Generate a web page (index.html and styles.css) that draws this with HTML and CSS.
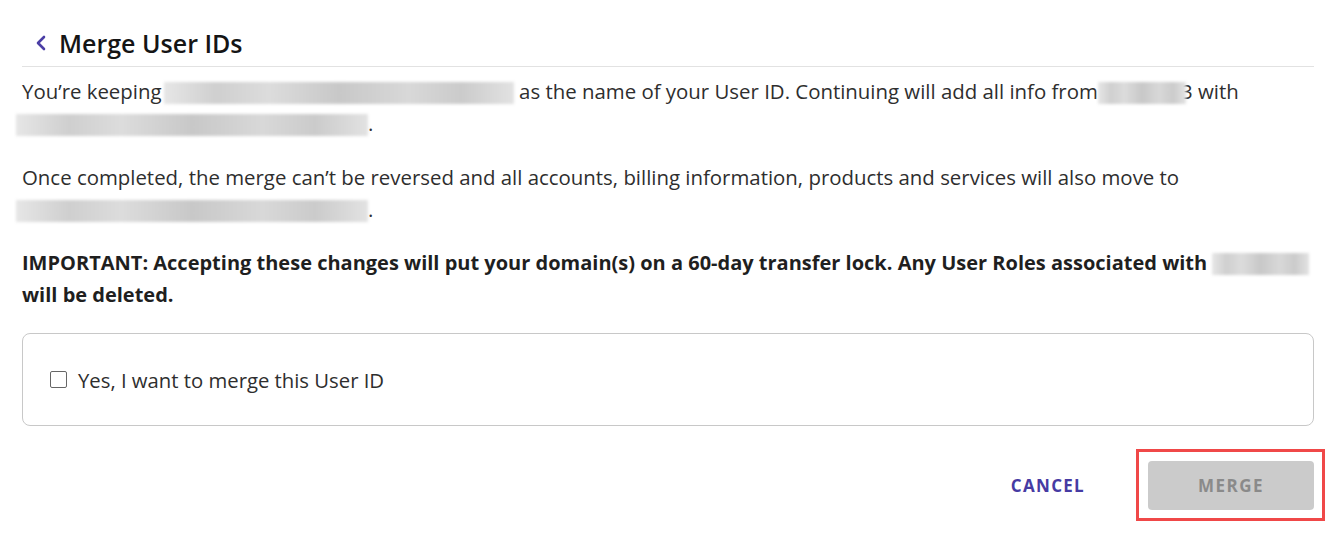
FILE: index.html
```html
<!DOCTYPE html>
<html>
<head>
<meta charset="utf-8">
<link rel="stylesheet" href="styles.css">
</head>
<body>
<div class="page">
  <div class="header">
    <span class="back"><svg width="12" height="16" viewBox="0 0 12 16"><path d="M9 2 L3 8 L9 14" fill="none" stroke="#4b3ea5" stroke-width="2.6" stroke-linecap="round" stroke-linejoin="round"/></svg></span>
    <h1 class="title">Merge User IDs</h1>
  </div>
  <p class="para first">You’re keeping <span class="redact r-email1"></span> as the name of your User ID. Continuing will add all info from <span class="redact r-id"></span>3 with <span class="redact r-email2"></span>.</p>
  <p class="para">Once completed, the merge can’t be reversed and all accounts, billing information, products and services will also move to <span class="redact r-email2"></span>.</p>
  <p class="para bold">IMPORTANT: Accepting these changes will put your domain(s) on a 60-day transfer lock. Any User Roles associated with <span class="redact r-id2"></span> will be deleted.</p>
  <div class="confirm">
    <label class="check"><span class="box"></span><span>Yes, I want to merge this User ID</span></label>
  </div>
  <div class="actions">
    <button class="cancel">CANCEL</button>
    <span class="highlight"><button class="merge">MERGE</button></span>
  </div>
</div>
</body>
</html>
```
FILE: styles.css
```css
html, body { margin: 0; padding: 0; background: #fff; }
body { font-family: "Open Sans", "Noto Sans", sans-serif; color: #2e2e2e; }
.page { padding: 0 19px 0 22px; }
.header {
  display: flex; align-items: center; gap: 12px;
  height: 67px; box-sizing: border-box; padding: 19px 0 0 13px;
  border-bottom: 1px solid #e2e2e2;
}
.back { display: flex; align-items: center; }
.title { margin: 0; font-size: 25px; font-weight: 600; color: #151515; line-height: 32px; }
.para { margin: 0 0 22px 0; font-size: 20.4px; line-height: 32px; }
.para.first { padding-top: 8px; }
.bold { font-weight: 700; color: #1f1f1f; font-size: 20px; }
.redact {
  display: inline-block; height: 22px; vertical-align: -5px;
  background: linear-gradient(90deg, #e6e6e6, #cfcfcf 15%, #dcdcdc 30%, #c8c8c8 50%, #d8d8d8 70%, #cbcbcb 85%, #e2e2e2);
  filter: blur(1.5px);
}
.r-email1 { width: 350px; margin: 0 0 0 -3px; }
.r-id { width: 88px; margin-left: -5px; margin-right: -5px; }
.r-email2 { width: 352px; margin-left: -6px; }
.r-id2 { width: 97px; }
.confirm {
  margin-top: 21px;
  border: 1px solid #c8c8c8; border-radius: 8px;
  height: 93px; box-sizing: border-box;
  display: flex; align-items: center; padding-left: 27px;
}
.check { display: flex; align-items: center; gap: 11px; font-size: 20.3px; color: #2e2e2e; }
.box { width: 15px; height: 15px; border: 1.5px solid #666; border-radius: 2px; display: inline-block; }
.actions {
  display: flex; justify-content: flex-end; align-items: center;
  margin-top: 23px;
}
.cancel {
  background: none; border: none; font-family: inherit;
  font-size: 17px; font-weight: 700; letter-spacing: 1.3px; color: #463ba3;
  margin-right: 51px; padding: 0;
}
.highlight {
  border: 3px solid #f04848; padding: 9px 8px 8px 9px; margin-right: -11px;
  display: flex;
}
.merge {
  width: 166px; height: 49px; border: none; border-radius: 4px;
  background: #cbcbcb; color: #8a8a8a; font-family: inherit;
  font-size: 17px; font-weight: 700; letter-spacing: 1.5px;
}
```
